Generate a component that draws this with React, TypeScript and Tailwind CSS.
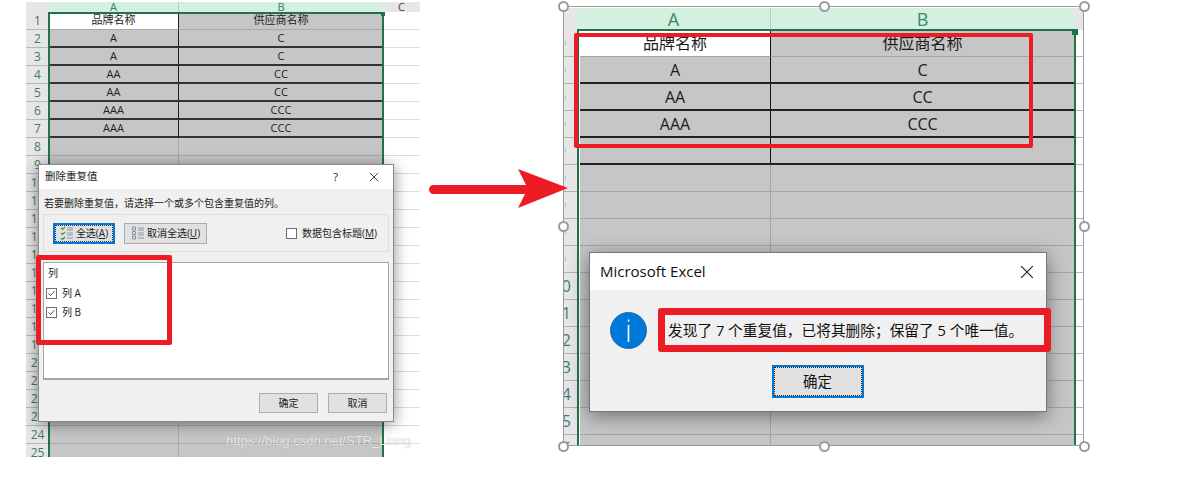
import React from "react";

const leftRows = [
  { a: "品牌名称", b: "供应商名称" },
  { a: "A", b: "C" },
  { a: "A", b: "C" },
  { a: "AA", b: "CC" },
  { a: "AA", b: "CC" },
  { a: "AAA", b: "CCC" },
  { a: "AAA", b: "CCC" },
];

const rightRows = [
  { a: "品牌名称", b: "供应商名称" },
  { a: "A", b: "C" },
  { a: "AA", b: "CC" },
  { a: "AAA", b: "CCC" },
  { a: "", b: "" },
];

const CloseIcon = ({ size }: { size: number }) => (
  <svg width={size} height={size} viewBox="0 0 12 12" fill="none" stroke="#222" strokeWidth="1">
    <path d="M1 1l10 10M11 1L1 11" />
  </svg>
);

const CheckBox = ({ checked }: { checked?: boolean }) => (
  <svg width="11" height="11" viewBox="0 0 11 11" fill="none">
    <rect x="0.5" y="0.5" width="10" height="10" fill="#fff" stroke="#6e6e6e" />
    {checked && <path d="M2.5 5.5l2 2 4-4.5" stroke="#555" strokeWidth="1" />}
  </svg>
);

const ListIcon = ({ color }: { color: string }) => (
  <svg width="14" height="14" viewBox="0 0 14 14" fill="none">
    <path d="M1 2l1.5 1.5L5 1M1 7l1.5 1.5L5 6M1 12l1.5 1.5L5 11" stroke={color} strokeWidth="1.2" />
    <path d="M7 2h6M7 4h6M7 7h6M7 9h6M7 12h6" stroke="#8d9aa8" strokeWidth="1" />
  </svg>
);

const UncheckIcon = () => (
  <svg width="14" height="14" viewBox="0 0 14 14" fill="none">
    <path d="M1.5 1h3v3h-3zM1.5 5.5h3v3h-3zM1.5 10h3v3h-3z" stroke="#7f93ad" strokeWidth="1" />
    <path d="M7 2h6M7 4h6M7 7h6M7 9h6M7 12h6" stroke="#8d9aa8" strokeWidth="1" />
  </svg>
);

const Handle = ({ className }: { className: string }) => (
  <div className={`absolute w-[11px] h-[11px] rounded-full bg-white border-2 border-[#9a9a9a] ${className}`} />
);

const LeftSheet = () => (
  <div className="relative w-[394px] h-[455px] overflow-hidden shrink-0">
    <div className="flex h-[10px] text-[11px] leading-[10px] text-[#3c7a5a]">
      <div className="w-[23px] bg-[#e6e6e6]" />
      <div className="w-[130px] bg-[#d3f0e0] border-r border-[#b5cfc0] text-center">A</div>
      <div className="w-[204px] bg-[#d3f0e0] text-center">B</div>
      <div className="flex-1 bg-[#e6e6e6] text-center text-[#444]">C</div>
    </div>
    {Array.from({ length: 25 }, (_, i) => {
      const row = leftRows[i];
      const dark = i >= 1 && i <= 6;
      return (
        <div key={i} className="flex h-[18px] shrink-0 text-[11px] text-[#222]">
          <div className="w-[23px] bg-[#e6e6e6] border-b border-[#b8b8b8] flex items-center justify-center text-[12px] text-[#3f7a5f]">
            {i + 1}
          </div>
          <div
            className={`w-[130px] flex items-center justify-center border-r ${
              i === 0 ? "bg-white" : "bg-[#c6c6c6]"
            } ${row ? "border-[#222]" : "border-[#a8a8a8]"} ${
              dark ? "border-b-2 border-b-[#333]" : "border-b border-b-[#a8a8a8]"
            }`}
          >
            {row?.a}
          </div>
          <div
            className={`w-[204px] flex items-center justify-center bg-[#c6c6c6] ${
              dark ? "border-b-2 border-b-[#333]" : "border-b border-b-[#a8a8a8]"
            }`}
          >
            {row?.b}
          </div>
          <div className="flex-1 bg-white border-b border-[#dcdcdc]" />
        </div>
      );
    })}

    {/* selection border */}
    <div className="absolute left-[22px] top-[10px] w-[336px] h-[445px] border-2 border-b-0 border-[#217346]" />
    <div className="absolute left-[355px] top-[10px] w-[4px] h-[4px] bg-[#217346]" />

    {/* remove duplicates dialog */}
    <div className="absolute left-[12px] top-[162px] w-[356px] h-[258px] flex flex-col bg-[#f0f0f0] border border-[#8a8a8a] shadow-[0_2px_14px_rgba(0,0,0,0.45)] text-[#222]">
      <div className="h-[24px] shrink-0 bg-white flex items-center pl-[6px] text-[10.5px]">
        <span className="flex-1">删除重复值</span>
        <span className="mr-[31px] text-[11px]">?</span>
        <div className="mr-[14px]">
          <CloseIcon size={10} />
        </div>
      </div>
      <div className="px-[4px] flex-1 flex flex-col">
        <p className="mt-[7px] pl-[1px] text-[10px] leading-[14px]">若要删除重复值，请选择一个或多个包含重复值的列。</p>
        <div className="mt-[4px] h-[38px] flex items-center pl-[9px] border border-[#dfdfdf] text-[10px]">
          <div className="w-[62px] h-[21px] flex items-center justify-center gap-[2px] bg-[#e1e1e1] border-2 border-[#0078d7] outline-1 -outline-offset-3 outline-dotted outline-[#333]">
            <ListIcon color="#3d9a3d" />
            <span>全选(<u>A</u>)</span>
          </div>
          <div className="ml-[9px] w-[83px] h-[21px] flex items-center justify-center gap-[2px] bg-[#e1e1e1] border border-[#adadad]">
            <UncheckIcon />
            <span>取消全选(<u>U</u>)</span>
          </div>
          <div className="ml-[79px] flex items-center gap-[5px]">
            <CheckBox />
            <span>数据包含标题(<u>M</u>)</span>
          </div>
        </div>
        <div className="mt-[10px] h-[118px] bg-white border border-[#a6a6a6] border-b-2 text-[10px] leading-[14px] pl-[2px]">
          <div className="pl-[2px] pt-[3px]">列</div>
          <div className="mt-[6px] flex items-center gap-[5px]">
            <CheckBox checked />
            <span>列 A</span>
          </div>
          <div className="mt-[5px] flex items-center gap-[5px]">
            <CheckBox checked />
            <span>列 B</span>
          </div>
        </div>
        <div className="mt-[13px] flex justify-end gap-[10px] pr-[2px] text-[10px]">
          <div className="w-[59px] h-[20px] flex items-center justify-center bg-[#e1e1e1] border border-[#adadad]">确定</div>
          <div className="w-[59px] h-[20px] flex items-center justify-center bg-[#e1e1e1] border border-[#adadad]">取消</div>
        </div>
      </div>
    </div>

    {/* red highlight */}
    <div className="absolute left-[10px] top-[253px] w-[136px] h-[90px] border-[5px] border-[#ed1c24] rounded-[2px]" />

    <span className="absolute left-[200px] top-[431px] whitespace-nowrap font-['Liberation_Sans',sans-serif] text-[13px] leading-[16px] text-white/80 [text-shadow:0_0_1px_rgba(0,0,0,0.3)]">
      https://blog.csdn.net/STR_Liang
    </span>
  </div>
);

const RightSheet = () => (
  <div className="relative w-[521px] h-[440px] shrink-0 border border-[#9a9a9a]">
    <div className="h-px" />
    <div className="flex h-[22px] text-[18px] leading-[22px] text-[#3c8a6a]">
      <div className="w-[13px] bg-[#e6e6e6]" />
      <div className="w-[194px] bg-[#d3f0e0] border-r border-[#b5cfc0] text-center">A</div>
      <div className="w-[303px] bg-[#d3f0e0] text-center">B</div>
      <div className="flex-1 bg-[#e6e6e6]" />
    </div>
    <div className="h-[415px] overflow-hidden">
      {Array.from({ length: 16 }, (_, i) => {
        const row = rightRows[i];
        const dark = i >= 1 && i <= 4;
        const num = i + 1;
        return (
          <div key={i} className="flex h-[27px] text-[16px] text-[#1a1a1a]">
            <div className="w-[13px] bg-[#e6e6e6] border-b border-[#b0b0b0] overflow-hidden flex items-center justify-end pr-[6px] text-[#3f7a7a]">
              {num >= 10 ? <span className="whitespace-nowrap">{num}</span> : <span className="w-px h-[4px] mr-[5px] bg-[#8fd0e4]" />}
            </div>
            <div className="w-[3px] bg-white" />
            <div
              className={`w-[191px] flex items-center justify-center border-r ${i === 0 ? "bg-white" : "bg-[#c6c6c6]"} ${
                row ? "border-r-[#111]" : "border-r-[#a4a4a4]"
              } ${dark ? "border-b-2 border-b-[#222]" : "border-b border-b-[#a4a4a4]"}`}
            >
              {row?.a}
            </div>
            <div
              className={`w-[303px] flex items-center justify-center bg-[#c6c6c6] ${
                dark ? "border-b-2 border-b-[#222]" : "border-b border-b-[#a4a4a4]"
              }`}
            >
              {row?.b}
            </div>
            <div className="flex-1 bg-white border-b border-[#b8b8b8]" />
          </div>
        );
      })}
    </div>

    {/* selection border */}
    <div className="absolute left-[13px] top-[22px] w-[499px] h-[416px] border-2 border-b-0 border-[#217346]" />
    <div className="absolute left-[508px] top-[22px] w-[6px] h-[6px] bg-[#217346]" />

    {/* message box */}
    <div className="absolute left-[25px] top-[245px] w-[458px] h-[160px] flex flex-col bg-[#f0f0f0] border border-[#777] shadow-[0_4px_18px_rgba(0,0,0,0.45)] text-[#111]">
      <div className="h-[37px] shrink-0 bg-white flex items-center justify-between pl-[10px] pr-[12px] text-[15px]">
        <span>Microsoft Excel</span>
        <CloseIcon size={14} />
      </div>
      <div className="flex items-center pl-[20px] mt-[21px] h-[38px]">
        <svg width="37" height="37" viewBox="0 0 37 37" className="shrink-0">
          <circle cx="18.5" cy="18.5" r="18" fill="#0078d7" stroke="#1b5e9e" strokeWidth="0.8" />
          <path d="M18.5 7.5v2M18.5 13v17" stroke="#fff" strokeWidth="1.6" />
        </svg>
        <span className="ml-[21px] text-[14.7px] whitespace-nowrap">发现了 7 个重复值，已将其删除；保留了 5 个唯一值。</span>
      </div>
      <div className="mt-[16px] self-center ml-[-1px] w-[92px] h-[33px] flex items-center justify-center bg-[#e1e1e1] border-2 border-[#0078d7] outline-1 -outline-offset-3 outline-dotted outline-[#222] text-[14.5px]">
        确定
      </div>
    </div>

    {/* red highlights */}
    <div className="absolute left-[10px] top-[26px] w-[459px] h-[115px] border-[4px] border-[#ed1c24] rounded-[2px]" />
    <div className="absolute left-[94px] top-[301px] w-[393px] h-[44px] border-[7px] border-[#ed1c24] rounded-[3px]" />

    <Handle className="left-[-6px] top-[-6px]" />
    <Handle className="left-[255px] top-[-6px]" />
    <Handle className="right-[-7px] top-[-6px]" />
    <Handle className="left-[-6px] top-[214px]" />
    <Handle className="right-[-7px] top-[214px]" />
    <Handle className="left-[-6px] bottom-[-7px]" />
    <Handle className="left-[255px] bottom-[-7px]" />
    <Handle className="right-[-7px] bottom-[-7px]" />
  </div>
);

const Arrow = () => (
  <svg width="143" height="45" viewBox="0 0 143 45" className="relative z-10 shrink-0 mt-[163px] ml-[9px]">
    <path
      d="M4.5 20H97L89 4l50 19-50 20 7-14H4.5a4.5 4.5 0 0 1 0-9z"
      fill="#ed1c24"
    />
  </svg>
);

export default function App() {
  return (
    <div className="w-[1189px] h-[481px] bg-white overflow-hidden flex items-start pl-[26px] pt-[2px] font-['Open_Sans','Noto_Sans_CJK_SC',sans-serif]">
      <LeftSheet />
      <Arrow />
      <div className="ml-[-9px] mt-[4px]">
        <RightSheet />
      </div>
    </div>
  );
}
